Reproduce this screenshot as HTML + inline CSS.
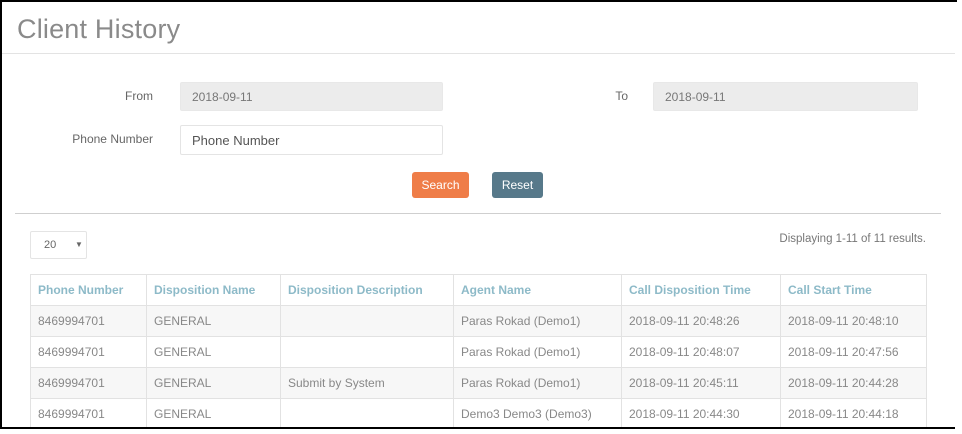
<!DOCTYPE html>
<html><head><style>
body{margin:0;width:962px;height:434px;background:#fff;font-family:"Liberation Sans",sans-serif;overflow:hidden;position:relative}
.frame{position:absolute;left:0;top:0;width:955px;height:427px;border-top:2px solid #000;border-left:2px solid #000;border-bottom:2px solid #000}
.abs{position:absolute}
.title{left:17px;top:14px;font-size:27px;color:#8a8a8a;font-weight:300;letter-spacing:0.2px}
.lbl{font-size:12px;color:#666;text-align:right}
.inp{border:1px solid #e4e4e4;border-radius:2px;box-sizing:border-box;font-size:12px;color:#777;padding-left:11px}
.btn{color:#fff;font-size:12px;text-align:center;border-radius:3px;line-height:26px}
table{position:absolute;left:30px;top:274px;border-collapse:collapse;font-size:12px;color:#888;width:897px}
td,th{border:1px solid #e2e2e2;padding:0 7px;height:30px;text-align:left;white-space:nowrap}
th{color:#8dbac8;font-weight:bold;height:30px}
tr:nth-child(even) td{background:#f7f7f7}
</style></head><body>
<div class="frame"></div>
<div class="abs title">Client History</div>
<div class="abs" style="left:2px;top:53px;width:953px;height:1px;background:#e3e3e3"></div>
<div class="abs lbl" style="left:60px;top:89px;width:93px">From</div>
<div class="abs inp" style="left:180px;top:82px;width:263px;height:29px;line-height:28px;background:#ececec;border-color:#e8e8e8">2018-09-11</div>
<div class="abs lbl" style="left:580px;top:89px;width:48px">To</div>
<div class="abs inp" style="left:653px;top:82px;width:265px;height:29px;line-height:28px;background:#ececec;border-color:#e8e8e8">2018-09-11</div>
<div class="abs lbl" style="left:40px;top:132px;width:113px">Phone Number</div>
<div class="abs inp" style="left:180px;top:125px;width:263px;height:30px;line-height:30px;font-size:13px;color:#555">Phone Number</div>
<div class="abs btn" style="left:412px;top:172px;width:57px;height:26px;background:#ef7d48">Search</div>
<div class="abs btn" style="left:492px;top:172px;width:51px;height:26px;background:#57798a">Reset</div>
<div class="abs" style="left:15px;top:213px;width:926px;height:1px;background:#cfcfcf"></div>
<div class="abs inp" style="left:30px;top:231px;width:57px;height:28px;line-height:26px;color:#666;font-size:11px;padding-left:13px">20<span style="position:absolute;left:44px;font-size:8px">▼</span></div>
<div class="abs" style="left:760px;top:233px;width:166px;text-align:right;font-size:11.5px;color:#777">Displaying 1-11 of 11 results.</div>
<table>
<tr><th style="width:101px">Phone Number</th><th style="width:119px">Disposition Name</th><th style="width:158px">Disposition Description</th><th style="width:153px">Agent Name</th><th style="width:144px">Call Disposition Time</th><th>Call Start Time</th></tr>
<tr><td>8469994701</td><td>GENERAL</td><td></td><td>Paras Rokad (Demo1)</td><td>2018-09-11 20:48:26</td><td>2018-09-11 20:48:10</td></tr>
<tr><td>8469994701</td><td>GENERAL</td><td></td><td>Paras Rokad (Demo1)</td><td>2018-09-11 20:48:07</td><td>2018-09-11 20:47:56</td></tr>
<tr><td>8469994701</td><td>GENERAL</td><td>Submit by System</td><td>Paras Rokad (Demo1)</td><td>2018-09-11 20:45:11</td><td>2018-09-11 20:44:28</td></tr>
<tr><td>8469994701</td><td>GENERAL</td><td></td><td>Demo3 Demo3 (Demo3)</td><td>2018-09-11 20:44:30</td><td>2018-09-11 20:44:18</td></tr>
</table>
<div class="abs" style="left:0;top:427px;width:955px;height:2px;background:#000"></div>
<div class="abs" style="left:0;top:429px;width:962px;height:5px;background:#fff"></div>
</body></html>
